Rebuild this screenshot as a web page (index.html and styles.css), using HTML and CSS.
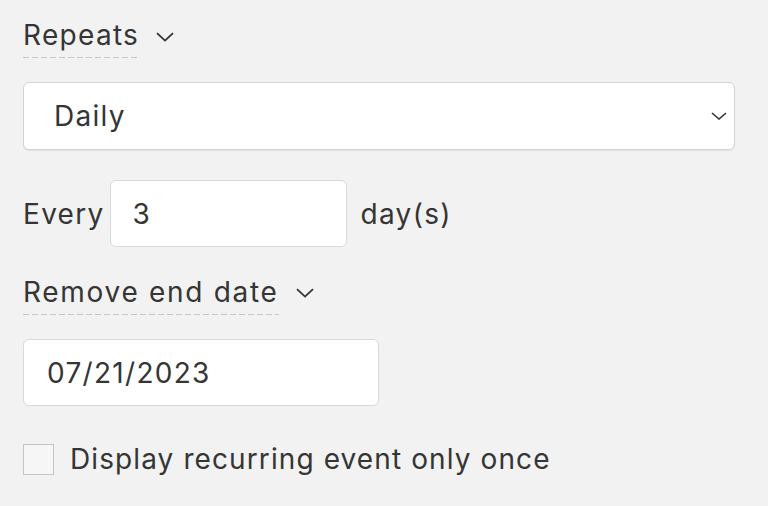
FILE: index.html
```html
<!DOCTYPE html>
<html>
<head>
<meta charset="utf-8">
<link rel="stylesheet" href="styles.css">
</head>
<body>
<div class="form">
  <div class="toggle toggle-first">
    <span class="toggle-label">Repeats</span>
    <svg class="chev" width="18" height="10" viewBox="0 0 18 10"><path d="M1 1.2 L9 8.6 L17 1.2" fill="none" stroke="#333" stroke-width="1.8"/></svg>
  </div>
  <div class="select">
    <span>Daily</span>
    <svg class="chev-sm" width="16" height="8" viewBox="0 0 16 8"><path d="M1 1 L8 7 L15 1" fill="none" stroke="#333" stroke-width="1.6"/></svg>
  </div>
  <div class="every">
    <span>Every</span>
    <div class="field num">3</div>
    <span>day(s)</span>
  </div>
  <div class="toggle toggle-second">
    <span class="toggle-label">Remove end date</span>
    <svg class="chev" width="18" height="10" viewBox="0 0 18 10"><path d="M1 1.2 L9 8.6 L17 1.2" fill="none" stroke="#333" stroke-width="1.8"/></svg>
  </div>
  <div class="field date">07/21/2023</div>
  <label class="check">
    <span class="box"></span>
    <span class="check-text">Display recurring event only once</span>
  </label>
</div>
</body>
</html>
```
FILE: styles.css
```css
html, body { margin: 0; padding: 0; background: #f2f2f2; }
body { font-family: Inter, "DejaVu Sans", sans-serif; color: #353535; font-size: 28px; letter-spacing: 1.3px; }
.form { padding: 15px 33px 0 23px; display: flex; flex-direction: column; align-items: stretch; }
.toggle { display: flex; align-items: flex-start; gap: 17px; }
.toggle-label {
  line-height: 40px;
  padding-bottom: 3px;
  background-image: repeating-linear-gradient(to right, #c6c6c6 0 6px, transparent 6px 9px);
  background-repeat: no-repeat;
  background-size: 100% 1.5px;
  background-position: left bottom;
}
.toggle-second .toggle-label { letter-spacing: 1.7px; }
.chev { margin-top: 17px; }
.toggle-second .chev { margin-top: 16px; }
.select {
  margin-top: 24px; height: 68px; box-sizing: border-box;
  background: #fff; border: 1px solid #cfd3d8; border-radius: 6px;
  display: flex; align-items: center; justify-content: space-between;
  padding: 0 7px 0 30px; box-shadow: 0 1px 1px rgba(0,0,0,0.06);
}
.every { display: flex; align-items: center; margin-top: 30px; }
.field {
  background: #fff; border: 1px solid #d7dadd; border-radius: 6px;
  height: 67px; display: flex; align-items: center; box-sizing: border-box;
}
.num { width: 237px; padding-left: 22px; margin: 0 14px 0 5px; }
.toggle-second { margin-top: 25px; }
.date { width: 356px; padding-left: 23px; margin-top: 24px; }
.check { display: flex; align-items: center; gap: 16px; margin-top: 36px; }
.check-text { letter-spacing: 1.1px; }
.box { width: 31px; height: 31px; border: 1.5px solid #c4c4c4; box-sizing: border-box; background: #f6f6f6; }
```
